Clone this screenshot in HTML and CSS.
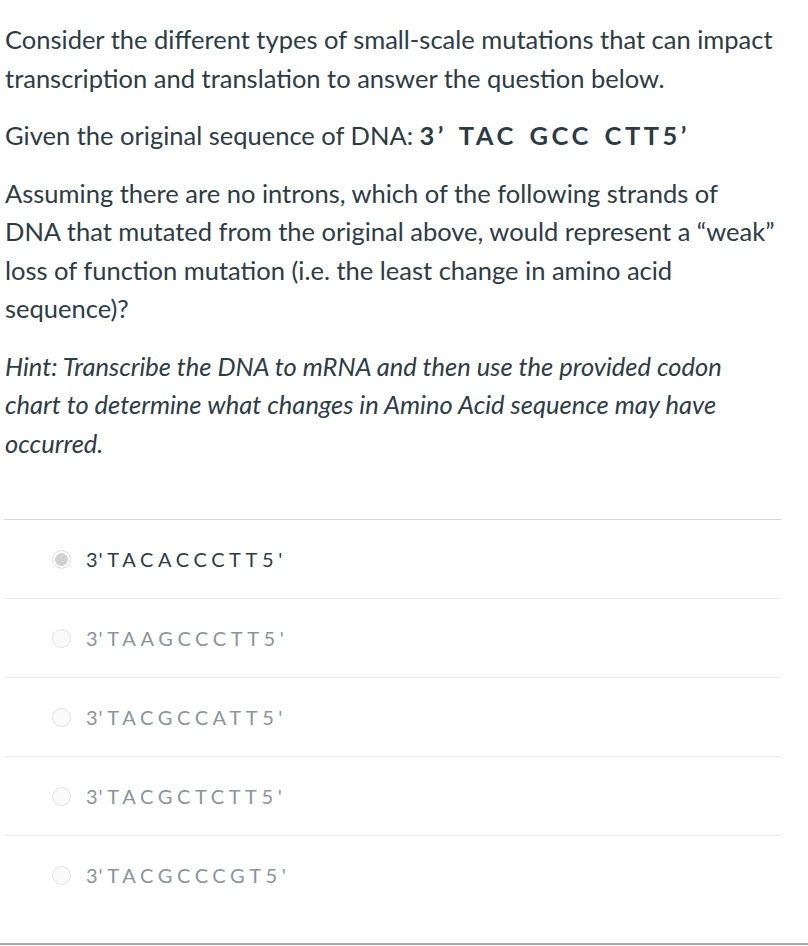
FILE: index.html
```html
<!DOCTYPE html>
<html>
<head>
<meta charset="utf-8">
<link rel="stylesheet" href="styles.css">
</head>
<body>
<div class="page">
  <div class="question">
    <p>Consider the different types of small-scale mutations that can impact transcription and translation to answer the question below.</p>
    <p>Given the original sequence of DNA: <strong class="seq">3’ TAC GCC CTT5’</strong></p>
    <p>Assuming there are no introns, which of the following strands of DNA that mutated from the original above, would represent a “weak” loss of function mutation (i.e. the least change in amino acid sequence)?</p>
    <p class="hint">Hint: Transcribe the DNA to mRNA and then use the provided codon chart to determine what changes in Amino Acid sequence may have occurred.</p>
  </div>
  <div class="answers">
    <div class="answer selected"><span class="radio"></span><span class="label"><span class="prime">3</span>'TACACCCTT5'</span></div>
    <div class="answer"><span class="radio"></span><span class="label"><span class="prime">3</span>'TAAGCCCTT5'</span></div>
    <div class="answer"><span class="radio"></span><span class="label"><span class="prime">3</span>'TACGCCATT5'</span></div>
    <div class="answer"><span class="radio"></span><span class="label"><span class="prime">3</span>'TACGCTCTT5'</span></div>
    <div class="answer"><span class="radio"></span><span class="label"><span class="prime">3</span>'TACGCCCGT5'</span></div>
  </div>
</div>
<div class="bottom"></div>
</body>
</html>
```
FILE: styles.css
```css
html, body {
  margin: 0;
  padding: 0;
  background: #fff;
}
body {
  font-family: Lato, "Open Sans", sans-serif;
  color: #2d3b45;
  width: 808px;
  height: 946px;
  overflow: hidden;
  position: relative;
}
.page {
  padding: 20px 27px 0 4px;
}
.question {
  padding: 0 4px 0 1px;
  font-size: 25.5px;
  line-height: 38.5px;
}
.question p {
  margin: 0 0 19px 0;
}
.seq {
  font-weight: 700;
  letter-spacing: 3.5px;
  word-spacing: 3px;
}
.hint {
  font-style: italic;
}
.answers {
  margin-top: 57px;
  border-top: 1px solid #d8d8d8;
}
.answer {
  display: flex;
  align-items: center;
  height: 78px;
  border-bottom: 1px solid #ececec;
  padding-left: 48px;
  color: #8b949b;
}
.answer:last-child {
  border-bottom: none;
}
.answer.selected {
  color: #2d3b45;
}
.radio {
  width: 17px;
  height: 17px;
  border: 1.5px solid #e2e2e2;
  border-radius: 50%;
  background: #fafafa;
  margin-right: 15px;
  flex: none;
}
.selected .radio {
  background: #d2d2d2;
  border-color: #e2e2e2;
  box-shadow: inset 0 0 0 2px #fff;
}
.label {
  font-size: 20px;
  letter-spacing: 4.6px;
}
.prime {
  letter-spacing: 1px;
}
.bottom {
  position: absolute;
  left: 0;
  right: 0;
  bottom: 1px;
  height: 2px;
  background: #a9a9a9;
}
```
